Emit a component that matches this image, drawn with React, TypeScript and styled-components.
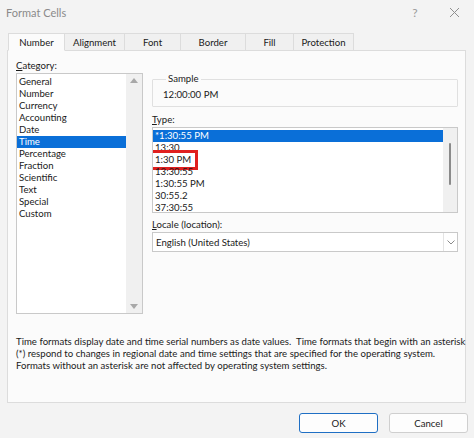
import React from 'react';
import styled, { createGlobalStyle } from 'styled-components';

const GlobalStyle = createGlobalStyle`
  html, body {
    margin: 0;
    padding: 0;
    background: #f3f3f3;
  }
  * {
    box-sizing: border-box;
  }
`;

const FONT = `Lato, 'Noto Sans', sans-serif`;

const Dialog = styled.div`
  width: 474px;
  height: 438px;
  background: #f3f3f3;
  font-family: ${FONT};
  font-size: 9.6px;
  color: #1a1a1a;
  display: flex;
  flex-direction: column;
`;

const TitleBar = styled.div`
  height: 28px;
  display: flex;
  align-items: center;
  padding: 0 0 4px 6px;
`;

const Title = styled.div`
  flex: 1;
  font-size: 11px;
  color: #8a8a8a;
`;

const TitleButton = styled.div<{ $width: number }>`
  width: ${(p) => p.$width}px;
  display: flex;
  justify-content: center;
  color: #9a9a9a;
  font-size: 12px;
`;

const TabStrip = styled.div`
  display: flex;
  margin: 5px 0 0 8px;
  height: 18px;
`;

const Tab = styled.div<{ $width: number; $active?: boolean }>`
  width: ${(p) => p.$width}px;
  display: flex;
  align-items: center;
  justify-content: center;
  background: ${(p) => (p.$active ? '#fbfbfb' : '#f0f0f0')};
  border: 1px solid #dcdcdc;
  border-bottom: 1px solid ${(p) => (p.$active ? '#fbfbfb' : '#dcdcdc')};
  margin-left: -1px;
  position: relative;
  z-index: ${(p) => (p.$active ? 1 : 0)};
  &:first-child {
    margin-left: 0;
  }
`;

const Panel = styled.div`
  margin: -1px 8px 0 7px;
  height: 353px;
  border: 1px solid #dcdcdc;
  background: #fbfbfb;
  padding: 8px 4px 0 8px;
  display: flex;
  flex-direction: column;
`;

const Columns = styled.div`
  display: flex;
  gap: 9px;
  padding-right: 3px;
`;

const LeftColumn = styled.div`
  width: 127px;
  display: flex;
  flex-direction: column;
`;

const RightColumn = styled.div`
  flex: 1;
  display: flex;
  flex-direction: column;
`;

const Label = styled.div`
  line-height: 14px;
  height: 14px;
  u {
    text-decoration: underline;
  }
`;

const ListBox = styled.div<{ $height: number }>`
  height: ${(p) => p.$height}px;
  border: 1px solid #c9c9c9;
  background: #ffffff;
  display: flex;
  overflow: hidden;
`;

const ListItems = styled.div<{ $pad: number }>`
  flex: 1;
  padding-top: ${(p) => p.$pad}px;
  min-width: 0;
`;

const ListItem = styled.div<{ $selected?: boolean }>`
  height: 12px;
  line-height: 12px;
  padding-left: 2px;
  white-space: nowrap;
  background: ${(p) => (p.$selected ? '#0a6fd8' : 'transparent')};
  color: ${(p) => (p.$selected ? '#ffffff' : '#1a1a1a')};
  position: relative;
`;

const Marked = styled.span`
  position: absolute;
  left: -3px;
  top: -4px;
  width: 48px;
  height: 20px;
  border: 3px solid #e0201f;
`;

const ScrollTrack = styled.div<{ $width: number }>`
  width: ${(p) => p.$width}px;
  background: #f0f0f0;
  display: flex;
  flex-direction: column;
  align-items: center;
  justify-content: space-between;
  padding: 4px 0;
`;

const ArrowUp = styled.div`
  width: 0;
  height: 0;
  border-left: 4px solid transparent;
  border-right: 4px solid transparent;
  border-bottom: 5px solid #a8a8a8;
`;

const ArrowDown = styled.div`
  width: 0;
  height: 0;
  border-left: 4px solid transparent;
  border-right: 4px solid transparent;
  border-top: 5px solid #a8a8a8;
`;

const Thumb = styled.div`
  width: 2px;
  height: 42px;
  margin-top: 11px;
  background: #8a8a8a;
  border-radius: 1px;
`;

const SampleBox = styled.fieldset`
  margin: 13px 0 0 0;
  padding: 2px 0 0 10px;
  height: 35px;
  border: 1px solid #e0e0e0;
  border-radius: 1px;
  legend {
    padding: 0 2px;
    margin-left: 3px;
    line-height: 14px;
  }
`;

const SampleValue = styled.div`
  line-height: 14px;
`;

const TypeLabel = styled(Label)`
  margin-top: 6px;
`;

const LocaleLabel = styled(Label)`
  margin-top: 5px;
`;

const Combo = styled.div`
  height: 20px;
  border: 1px solid #c9c9c9;
  background: #ffffff;
  display: flex;
  align-items: center;
  padding-left: 3px;
`;

const ComboText = styled.div`
  flex: 1;
`;

const ComboButton = styled.div`
  width: 14px;
  height: 18px;
  border-left: 1px solid #e4e4e4;
  display: flex;
  align-items: center;
  justify-content: center;
`;

const Description = styled.p`
  margin: 22px 0 0 0;
  line-height: 12px;
  white-space: pre;
  word-spacing: 0.1px;
`;

const Footer = styled.div`
  display: flex;
  justify-content: flex-end;
  gap: 11px;
  padding: 10px 6px 0 0;
`;

const Button = styled.button<{ $primary?: boolean }>`
  width: 79px;
  height: 20px;
  font-family: ${FONT};
  font-size: 9.6px;
  color: #1a1a1a;
  background: #fdfdfd;
  border: 1px solid ${(p) => (p.$primary ? '#1f6fc4' : '#cfcfcf')};
  border-radius: 3px;
  padding: 0;
`;

const categories = [
  'General',
  'Number',
  'Currency',
  'Accounting',
  'Date',
  'Time',
  'Percentage',
  'Fraction',
  'Scientific',
  'Text',
  'Special',
  'Custom',
];

const types = ['*1:30:55 PM', '13:30', '1:30 PM', '13:30:55', '1:30:55 PM', '30:55.2', '37:30:55'];

export default function App() {
  return (
    <>
      <GlobalStyle />
      <Dialog>
        <TitleBar>
          <Title>Format Cells</Title>
          <TitleButton $width={38}>?</TitleButton>
          <TitleButton $width={40}>
            <svg width="11" height="11" viewBox="0 0 11 11">
              <path d="M1 1L10 10M10 1L1 10" stroke="#8f8f8f" strokeWidth="1" />
            </svg>
          </TitleButton>
        </TitleBar>

        <TabStrip>
          <Tab $width={57} $active>Number</Tab>
          <Tab $width={61}>Alignment</Tab>
          <Tab $width={57}>Font</Tab>
          <Tab $width={66}>Border</Tab>
          <Tab $width={49}>Fill</Tab>
          <Tab $width={61}>Protection</Tab>
        </TabStrip>

        <Panel>
          <Columns>
            <LeftColumn>
              <Label>
                <u>C</u>ategory:
              </Label>
              <ListBox $height={241}>
                <ListItems $pad={2}>
                  {categories.map((c) => (
                    <ListItem key={c} $selected={c === 'Time'}>
                      {c}
                    </ListItem>
                  ))}
                </ListItems>
                <ScrollTrack $width={16}>
                  <ArrowUp />
                  <ArrowDown />
                </ScrollTrack>
              </ListBox>
            </LeftColumn>

            <RightColumn>
              <SampleBox>
                <legend>Sample</legend>
                <SampleValue>12:00:00 PM</SampleValue>
              </SampleBox>

              <TypeLabel>
                <u>T</u>ype:
              </TypeLabel>
              <ListBox $height={86}>
                <ListItems $pad={2}>
                  {types.map((t, i) => (
                    <ListItem key={t} $selected={i === 0}>
                      {t}
                      {t === '1:30 PM' && <Marked />}
                    </ListItem>
                  ))}
                </ListItems>
                <ScrollTrack $width={14}>
                  <Thumb />
                  <span />
                </ScrollTrack>
              </ListBox>

              <LocaleLabel>
                <u>L</u>ocale (location):
              </LocaleLabel>
              <Combo>
                <ComboText>English (United States)</ComboText>
                <ComboButton>
                  <svg width="8" height="5" viewBox="0 0 8 5">
                    <path d="M0.5 0.5L4 4L7.5 0.5" fill="none" stroke="#8a8a8a" strokeWidth="1" />
                  </svg>
                </ComboButton>
              </Combo>
            </RightColumn>
          </Columns>

          <Description>
            {'Time formats display date and time serial numbers as date values.  Time formats that begin with an asterisk\n(*) respond to changes in regional date and time settings that are specified for the operating system.\nFormats without an asterisk are not affected by operating system settings.'}
          </Description>
        </Panel>

        <Footer>
          <Button $primary>OK</Button>
          <Button>Cancel</Button>
        </Footer>
      </Dialog>
    </>
  );
}
